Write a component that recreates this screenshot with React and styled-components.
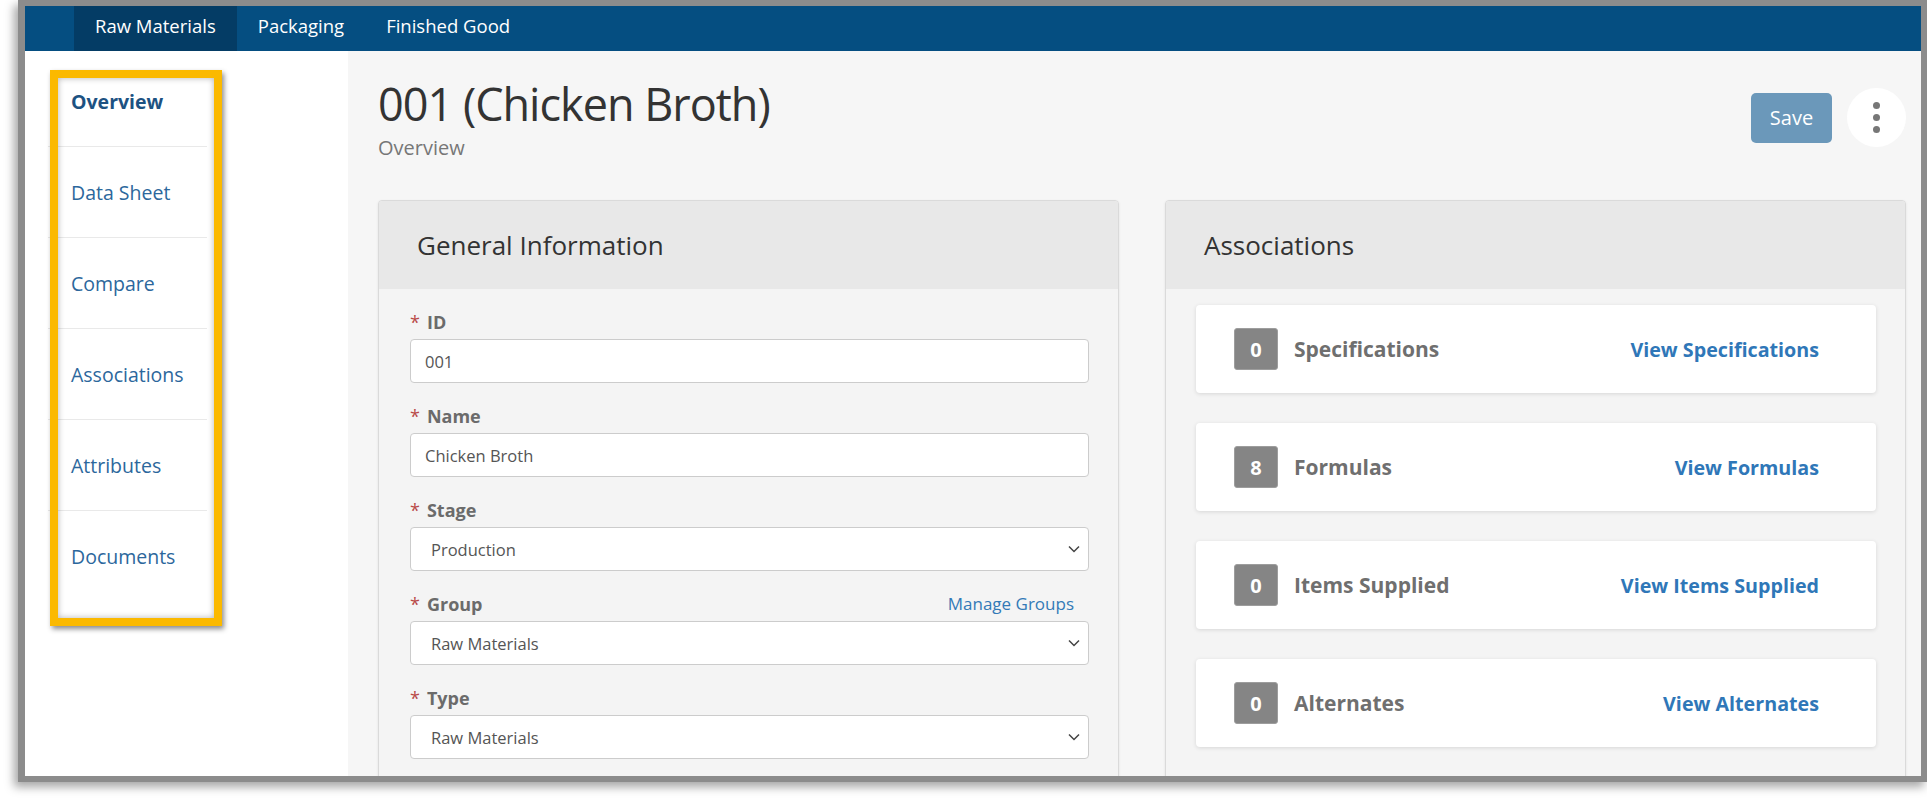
import React from 'react';
import styled, { createGlobalStyle } from 'styled-components';

const GlobalStyle = createGlobalStyle`
  html, body {
    margin: 0;
    padding: 0;
    background: #ffffff;
  }
  body {
    font-family: "Open Sans", "Noto Sans", sans-serif;
    overflow: hidden;
  }
  * {
    box-sizing: border-box;
  }
`

const tabs = ['Raw Materials', 'Packaging', 'Finished Good']
const menu = ['Overview', 'Data Sheet', 'Compare', 'Associations', 'Attributes', 'Documents']
const fields = [
  { label: 'ID', value: '001' },
  { label: 'Name', value: 'Chicken Broth' },
  { label: 'Stage', value: 'Production', select: true },
  { label: 'Group', value: 'Raw Materials', select: true, extra: 'Manage Groups' },
  { label: 'Type', value: 'Raw Materials', select: true },
]
const associations = [
  { count: 0, name: 'Specifications' },
  { count: 8, name: 'Formulas' },
  { count: 0, name: 'Items Supplied' },
  { count: 0, name: 'Alternates' },
]

const Chevron = () => (
  <svg width="12" height="8" viewBox="0 0 12 8" fill="none">
    <path d="M1 1.5 L6 6.5 L11 1.5" stroke="#444" strokeWidth="1.5" />
  </svg>
)

export default function App() {
  return (
    <React.Fragment>
      <GlobalStyle />
      <Page>
        <Frame>
          <TopNav>
            {tabs.map((t, i) => (
              <Tab key={t} active={i === 0}>{t}</Tab>
            ))}
          </TopNav>
          <Body>
            <Sidebar>
              <Menu>
                {menu.map((m, i) => (
                  <MenuItem key={m} active={i === 0}>{m}</MenuItem>
                ))}
              </Menu>
              <Highlight />
            </Sidebar>
            <Main>
              <HeaderRow>
                <div>
                  <Title>001 (Chicken Broth)</Title>
                  <Subtitle>Overview</Subtitle>
                </div>
                <Actions>
                  <SaveButton>Save</SaveButton>
                  <MoreButton>
                    <Dot />
                    <Dot />
                    <Dot />
                  </MoreButton>
                </Actions>
              </HeaderRow>
              <Columns>
                <Card>
                  <CardHeader>General Information</CardHeader>
                  <FormBody>
                    {fields.map(f => (
                      <Field key={f.label}>
                        <LabelRow>
                          <Label><Req>*</Req>{f.label}</Label>
                          {f.extra && <SmallLink>{f.extra}</SmallLink>}
                        </LabelRow>
                        {f.select ? (
                          <SelectBox>
                            <span>{f.value}</span>
                            <Chevron />
                          </SelectBox>
                        ) : (
                          <TextInput value={f.value} readOnly />
                        )}
                      </Field>
                    ))}
                  </FormBody>
                </Card>
                <Card>
                  <CardHeader>Associations</CardHeader>
                  <AssocBody>
                    {associations.map(a => (
                      <AssocRow key={a.name}>
                        <Badge>{a.count}</Badge>
                        <AssocName>{a.name}</AssocName>
                        <AssocLink>View {a.name}</AssocLink>
                      </AssocRow>
                    ))}
                  </AssocBody>
                </Card>
              </Columns>
            </Main>
          </Body>
        </Frame>
      </Page>
    </React.Fragment>
  )
}

const Page = styled.div`
  width: 1927px;
  height: 801px;
  overflow: hidden;
  padding-left: 18px;
  background: #ffffff;
`

const Frame = styled.div`
  width: 1910px;
  height: 782px;
  border: 7px solid #8c8c8c;
  border-top-width: 6px;
  border-bottom-width: 6px;
  box-shadow: -4px 5px 9px rgba(0, 0, 0, 0.35);
  display: flex;
  flex-direction: column;
  overflow: hidden;
  background: #f6f6f6;
`

const TopNav = styled.div`
  height: 45px;
  flex: none;
  display: flex;
  background: #054e81;
  padding-left: 49px;
`

const Tab = styled.div`
  padding: 0 21px;
  height: 45px;
  line-height: 40px;
  font-size: 18.5px;
  color: #ffffff;
  background: ${p => (p.active ? '#043c65' : 'transparent')};
`

const Body = styled.div`
  flex: 1;
  min-height: 0;
  display: flex;
`

const Sidebar = styled.div`
  position: relative;
  width: 323px;
  flex: none;
  background: #ffffff;
  padding: 5px 0 0 23px;
`

const Menu = styled.div`
  width: 159px;
`

const MenuItem = styled.div`
  height: 91px;
  display: flex;
  align-items: center;
  padding-left: 23px;
  font-size: 19.5px;
  color: ${p => (p.active ? '#1d5282' : '#2c679c')};
  font-weight: ${p => (p.active ? 700 : 400)};
  border-bottom: 1px solid #e9e9e9;
  &:last-child {
    border-bottom: none;
  }
`

const Highlight = styled.div`
  position: absolute;
  left: 25px;
  top: 19px;
  width: 172px;
  height: 556px;
  border: 8px solid #fbb900;
  box-shadow: 2px 3px 5px rgba(0, 0, 0, 0.45), inset 0 0 6px rgba(0, 0, 0, 0.3);
  pointer-events: none;
`

const Main = styled.div`
  flex: 1;
  min-width: 0;
  padding: 27px 15px 0 30px;
  background: #f6f6f6;
  overflow: hidden;
`

const HeaderRow = styled.div`
  display: flex;
  justify-content: space-between;
  align-items: flex-start;
`

const Title = styled.h1`
  margin: 0;
  font-size: 45px;
  font-weight: 400;
  line-height: 51px;
  color: #333333;
  letter-spacing: -1px;
`

const Subtitle = styled.div`
  margin-top: 6px;
  font-size: 20px;
  line-height: 26px;
  color: #777777;
`

const Actions = styled.div`
  display: flex;
  align-items: center;
  gap: 15px;
  margin-top: 10px;
`

const SaveButton = styled.button`
  width: 81px;
  height: 50px;
  border: none;
  border-radius: 5px;
  background: #6b98ba;
  color: #ffffff;
  font-family: inherit;
  font-size: 20px;
`

const MoreButton = styled.div`
  width: 59px;
  height: 59px;
  border-radius: 50%;
  background: #ffffff;
  display: flex;
  flex-direction: column;
  align-items: center;
  justify-content: center;
  gap: 5px;
`

const Dot = styled.span`
  width: 7px;
  height: 7px;
  border-radius: 50%;
  background: #777777;
`

const Columns = styled.div`
  display: grid;
  grid-template-columns: 1fr 1fr;
  gap: 46px;
  margin-top: 39px;
`

const Card = styled.div`
  height: 640px;
  background: #f4f4f4;
  border: 1px solid #dadada;
  border-radius: 4px;
  box-shadow: 0 1px 3px rgba(0, 0, 0, 0.08);
  overflow: hidden;
`

const CardHeader = styled.div`
  height: 88px;
  display: flex;
  align-items: center;
  padding-left: 38px;
  background: #e8e8e8;
  font-size: 26px;
  color: #333333;
`

const FormBody = styled.div`
  padding: 20px 29px 0 31px;
`

const Field = styled.div`
  margin-bottom: 20px;
`

const LabelRow = styled.div`
  height: 25px;
  display: flex;
  justify-content: space-between;
  align-items: center;
  padding-right: 15px;
  margin-bottom: 5px;
`

const Label = styled.div`
  font-size: 18px;
  font-weight: 700;
  color: #6b6b6b;
`

const Req = styled.span`
  color: #b94a48;
  font-weight: 400;
  margin-right: 7px;
`

const SmallLink = styled.a`
  font-size: 17px;
  color: #337ab7;
`

const TextInput = styled.input`
  display: block;
  width: 100%;
  height: 44px;
  border: 1px solid #cccccc;
  border-radius: 4px;
  background: #ffffff;
  padding: 0 14px;
  font-family: inherit;
  font-size: 16.5px;
  color: #555555;
  outline: none;
`

const SelectBox = styled.div`
  height: 44px;
  border: 1px solid #cccccc;
  border-radius: 4px;
  background: #ffffff;
  padding: 0 8px 0 20px;
  display: flex;
  align-items: center;
  justify-content: space-between;
  font-size: 16.5px;
  color: #555555;
`

const AssocBody = styled.div`
  padding: 16px 29px 0 30px;
`

const AssocRow = styled.div`
  height: 88px;
  display: flex;
  align-items: center;
  padding: 0 57px 0 38px;
  margin-bottom: 30px;
  background: #ffffff;
  border-radius: 4px;
  box-shadow: 0 1px 4px rgba(0, 0, 0, 0.12);
`

const Badge = styled.div`
  width: 44px;
  height: 42px;
  display: flex;
  align-items: center;
  justify-content: center;
  background: #858585;
  border: 1px solid #9d9d9d;
  border-radius: 3px;
  color: #ffffff;
  font-size: 20px;
  font-weight: 700;
`

const AssocName = styled.div`
  flex: 1;
  margin-left: 16px;
  font-size: 21px;
  font-weight: 700;
  color: #6f6f6f;
`

const AssocLink = styled.a`
  font-size: 19.7px;
  font-weight: 700;
  color: #2f77b8;
`
